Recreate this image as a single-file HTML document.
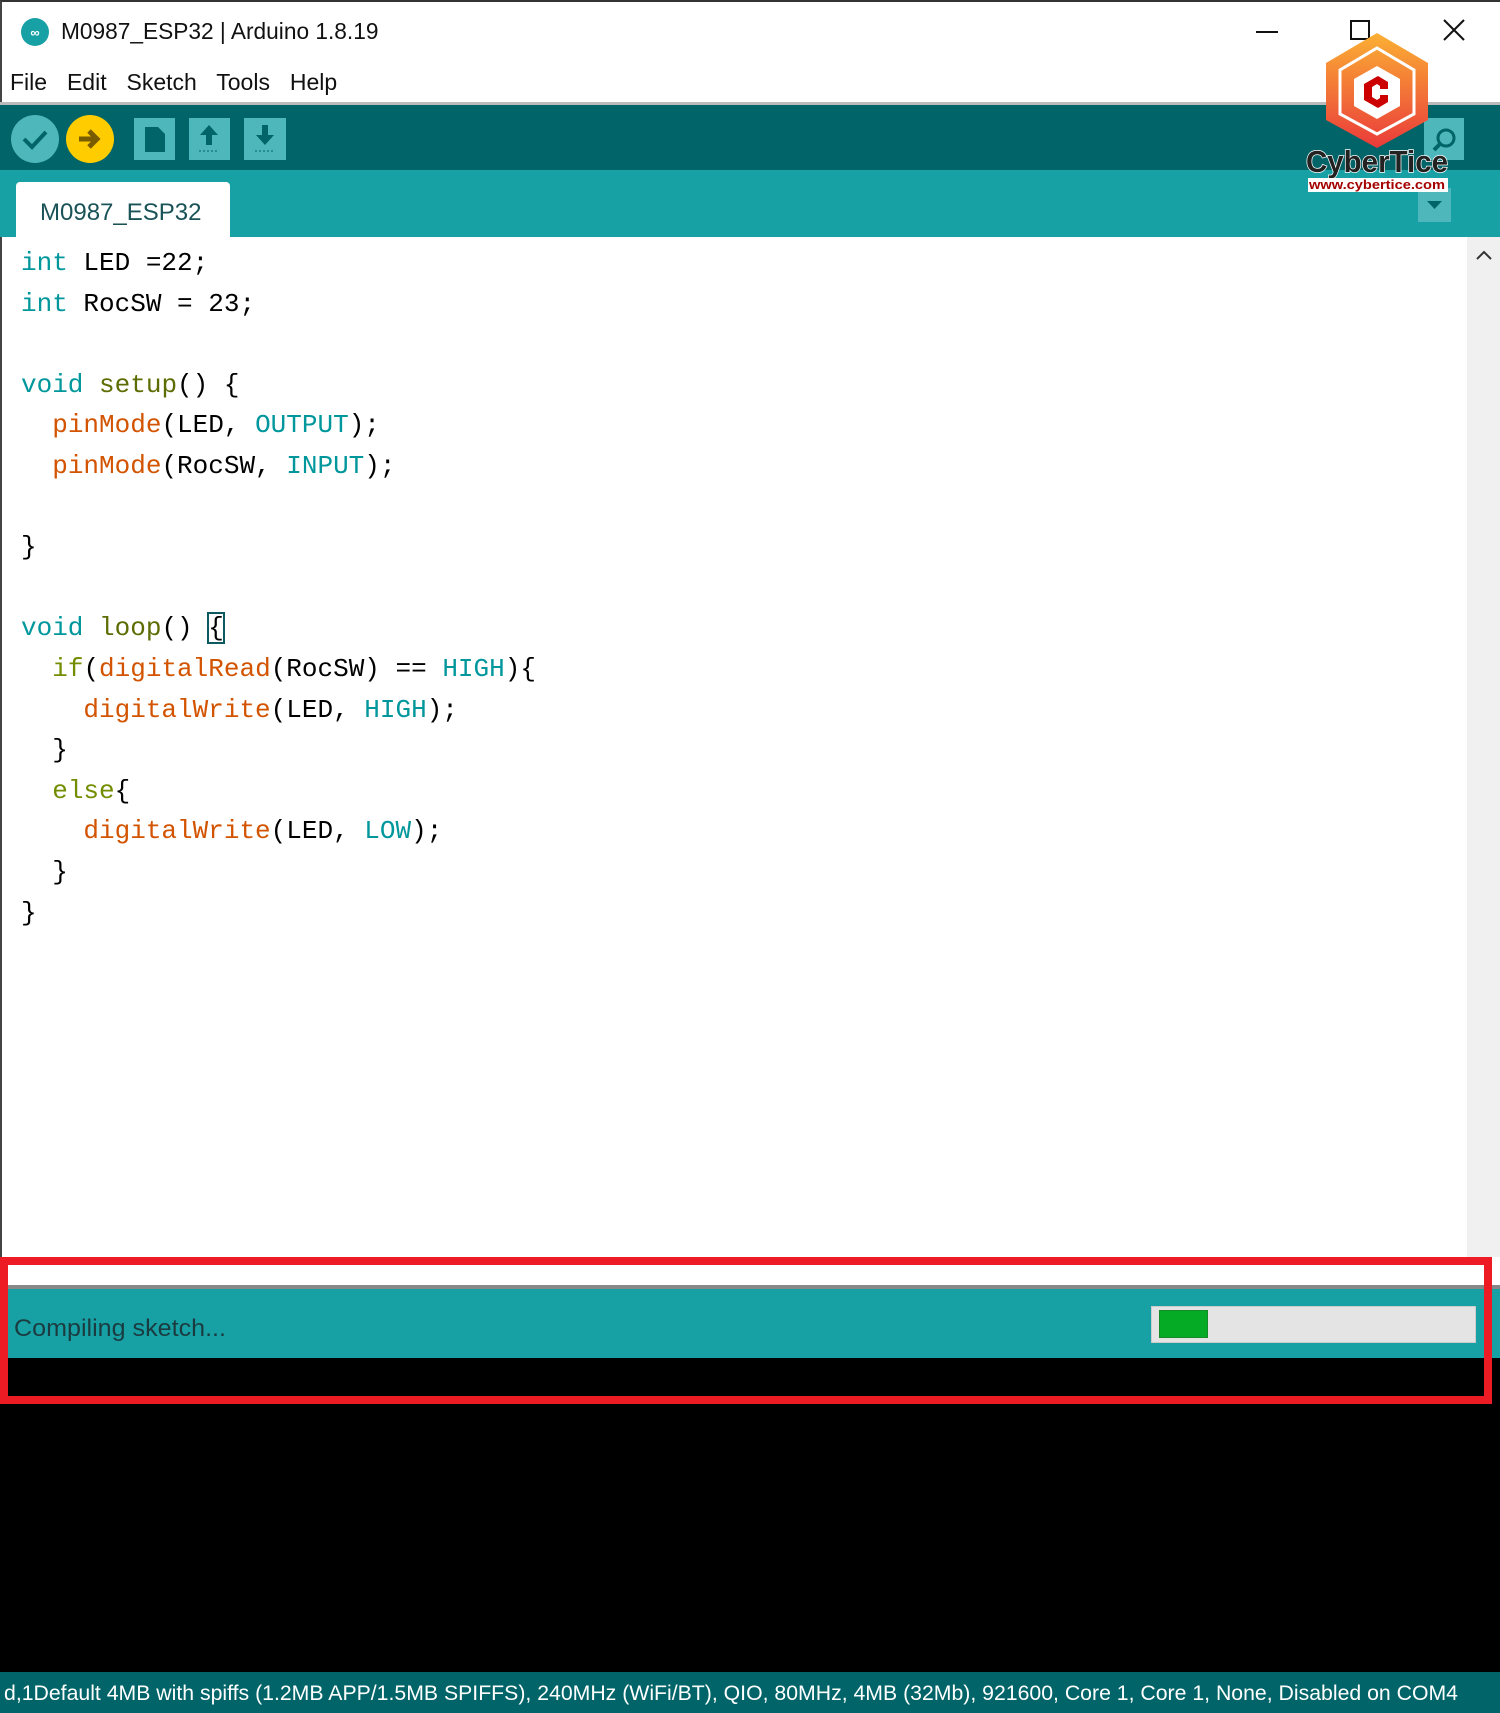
<!DOCTYPE html>
<html><head><meta charset="utf-8"><style>
*{margin:0;padding:0;box-sizing:border-box}
body{width:1500px;height:1713px;position:relative;overflow:hidden;background:#000;font-family:"Liberation Sans",sans-serif}
.abs{position:absolute}
#code{position:absolute;left:21px;top:243px;font-family:"Liberation Mono",monospace;font-size:26px;line-height:40.6px;color:#000;white-space:pre}
.k{color:#00979c}.f{color:#d35400}.g{color:#5e6d03}.o{color:#728e00}
</style></head><body>
<!-- title bar -->
<div class="abs" style="left:0;top:0;width:1500px;height:104px;background:#fff;border-top:2px solid #333;border-left:2px solid #444"></div>
<svg class="abs" style="left:20px;top:17px" width="30" height="30"><circle cx="15" cy="15" r="14" fill="#17a1a5"/><text x="15" y="20" font-size="13" font-weight="bold" fill="#fff" text-anchor="middle" font-family="Liberation Sans">∞</text></svg>
<div class="abs" style="left:61px;top:18px;font-size:22.7px;color:#111">M0987_ESP32 | Arduino 1.8.19</div>
<div class="abs" style="left:10px;top:69px;font-size:23px;color:#111;word-spacing:13.5px">File Edit Sketch Tools Help</div>
<div class="abs" style="left:1256px;top:31px;width:22px;height:2px;background:#111"></div>
<div class="abs" style="left:1350px;top:20px;width:20px;height:20px;border:2px solid #111"></div>
<svg class="abs" style="left:1443px;top:19px" width="22" height="22"><path d="M1 1L21 21M21 1L1 21" stroke="#111" stroke-width="2"/></svg>
<div class="abs" style="left:0;top:102px;width:1500px;height:3px;background:#bbb"></div>
<!-- toolbar -->
<div class="abs" style="left:0;top:105px;width:1500px;height:65px;background:#006468"></div>
<svg class="abs" style="left:0;top:105px" width="300" height="65">
<circle cx="35" cy="34" r="24" fill="#4db7bb"/><path d="M24 34l8 8 14-15" stroke="#006468" stroke-width="4" fill="none"/>
<circle cx="90" cy="34" r="24" fill="#ffcc00"/><path d="M79 34h16M89 26l8 8-8 8" stroke="#7a5c00" stroke-width="5" fill="none"/>
<rect x="134" y="13" width="41" height="42" fill="#4db7bb"/><path d="M145 22h13l7 7v18h-20z" fill="#006468"/>
<rect x="189" y="13" width="41" height="42" fill="#4db7bb"/><path d="M209 20l-9 10h6v10h6V30h6z" fill="#006468"/><path d="M199 46h20" stroke="#006468" stroke-dasharray="2 2"/>
<rect x="244" y="13" width="42" height="42" fill="#4db7bb"/><path d="M262 20v10h-6l9 10 9-10h-6V20z" fill="#006468"/><path d="M255 46h20" stroke="#006468" stroke-dasharray="2 2"/>
</svg>
<div class="abs" style="left:1424px;top:118px;width:40px;height:42px;background:#4db7bb"></div>
<svg class="abs" style="left:1424px;top:118px" width="40" height="42"><circle cx="22" cy="20" r="8" stroke="#006468" stroke-width="3" fill="none"/><path d="M16 26l-6 6" stroke="#006468" stroke-width="4"/></svg>
<!-- tab bar -->
<div class="abs" style="left:0;top:170px;width:1500px;height:67px;background:#17a1a5"></div>
<div class="abs" style="left:16px;top:182px;width:214px;height:56px;background:#fff;border-radius:4px 4px 0 0"></div>
<div class="abs" style="left:40px;top:199px;font-size:24px;color:#1a5357">M0987_ESP32</div>
<div class="abs" style="left:1418px;top:188px;width:33px;height:34px;background:#4db7bb"></div>
<svg class="abs" style="left:1418px;top:188px" width="33" height="34"><path d="M9 13h15l-7.5 8z" fill="#006468"/></svg>
<!-- editor -->
<div class="abs" style="left:0;top:237px;width:1467px;height:1020px;background:#fff;border-left:2px solid #444"></div>
<div class="abs" style="left:1467px;top:237px;width:33px;height:1020px;background:#f0f0f0"></div>
<svg class="abs" style="left:1474px;top:248px" width="20" height="14"><path d="M3 11l7-7 7 7" stroke="#333" stroke-width="2" fill="none"/></svg>
<div id="code"><span class="k">int</span> LED =22;
<span class="k">int</span> RocSW = 23;

<span class="k">void</span> <span class="g">setup</span>() {
  <span class="f">pinMode</span>(LED, <span class="k">OUTPUT</span>);
  <span class="f">pinMode</span>(RocSW, <span class="k">INPUT</span>);

}

<span class="k">void</span> <span class="g">loop</span>() <span style="outline:2px solid #0a5a60;outline-offset:-1px">{</span>
  <span class="o">if</span>(<span class="f">digitalRead</span>(RocSW) == <span class="k">HIGH</span>){
    <span class="f">digitalWrite</span>(LED, <span class="k">HIGH</span>);
  }
  <span class="o">else</span>{
    <span class="f">digitalWrite</span>(LED, <span class="k">LOW</span>);
  }
}</div>
<!-- status area -->
<div class="abs" style="left:0;top:1257px;width:1500px;height:28px;background:#fff"></div>
<div class="abs" style="left:0;top:1285px;width:1500px;height:4px;background:#888"></div>
<div class="abs" style="left:0;top:1289px;width:1500px;height:69px;background:#17a1a5"></div>
<svg class="abs" style="left:0;top:1289px" width="400" height="69"><text x="14" y="47" font-size="24" fill="#1a3c40" textLength="212" lengthAdjust="spacingAndGlyphs" font-family="Liberation Sans">Compiling sketch...</text></svg>
<div class="abs" style="left:1151px;top:1306px;width:325px;height:37px;background:#e4e4e4;border:1px solid #ccc"></div>
<div class="abs" style="left:1159px;top:1310px;width:49px;height:28px;background:#06ab25;border:1px solid #158a28"></div>
<div class="abs" style="left:0;top:1257px;width:1492px;height:147px;border:8px solid #ed1c24"></div>
<!-- bottom bar -->
<div class="abs" style="left:0;top:1672px;width:1500px;height:41px;background:#006468"></div>
<svg class="abs" style="left:0;top:1672px" width="1500" height="41"><text x="4" y="28" font-size="21" fill="#fff" textLength="1454" lengthAdjust="spacingAndGlyphs" font-family="Liberation Sans">d,1Default 4MB with spiffs (1.2MB APP/1.5MB SPIFFS), 240MHz (WiFi/BT), QIO, 80MHz, 4MB (32Mb), 921600, Core 1, Core 1, None, Disabled on COM4</text></svg>
<!-- logo -->
<svg class="abs" style="left:1300px;top:30px" width="160" height="170">
<defs><linearGradient id="lg" x1="0" y1="0" x2="0" y2="1"><stop offset="0" stop-color="#fbb034"/><stop offset="1" stop-color="#ea3a3a"/></linearGradient></defs>
<polygon points="77,3 128,33 128,90 77,118 26,90 26,33" fill="url(#lg)"/>
<polygon points="77,18 114,40 114,84 77,104 40,84 40,40" fill="none" stroke="#fff" stroke-width="3"/>
<polygon points="77,36 100,49 100,76 77,89 54,76 54,49" fill="#fff"/>
<path d="M88 52l-10-6-14 8v16l14 8 10-6v-7h-8v3l-3 2-5-3v-10l5-3 3 2v3h8z" fill="#c00"/>
<text x="77" y="142" font-size="31" font-weight="bold" fill="#222" stroke="#fff" stroke-width="1.5" paint-order="stroke" text-anchor="middle" font-family="Liberation Sans" textLength="142" lengthAdjust="spacingAndGlyphs">CyberTice</text>
<rect x="8" y="148" width="140" height="14" fill="#fff"/>
<text x="77" y="159" font-size="13" font-weight="bold" fill="#a50000" text-anchor="middle" font-family="Liberation Sans" textLength="136" lengthAdjust="spacingAndGlyphs">www.cybertice.com</text>
</svg>
</body></html>
